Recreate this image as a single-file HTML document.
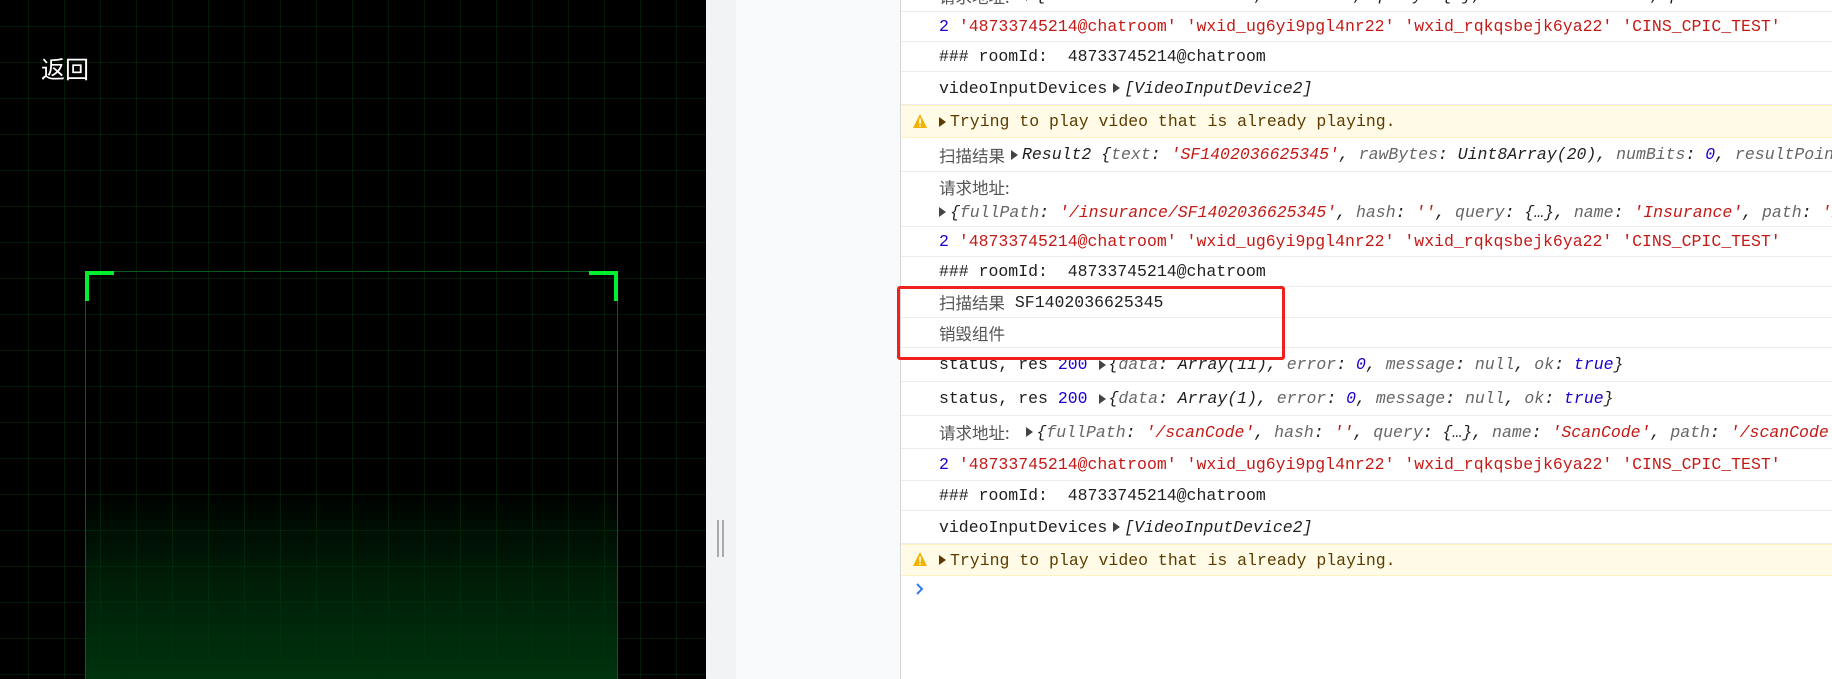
<!DOCTYPE html>
<html><head><meta charset="utf-8">
<style>
*{margin:0;padding:0;box-sizing:border-box}
html,body{width:1832px;height:679px;overflow:hidden;background:#fff}
body{position:relative;font-family:"Liberation Mono","Noto Sans CJK SC",monospace}
#left{position:absolute;left:0;top:0;width:706px;height:679px;background:#000;
 background-image:linear-gradient(to right,rgba(0,120,30,.22) 1px,transparent 1px),linear-gradient(to bottom,rgba(0,120,30,.22) 1px,transparent 1px);
 background-size:36px 36px;background-position:28px 26px;overflow:hidden}
#back{position:absolute;left:41px;top:50px;color:#fff;font:24px "Noto Sans CJK SC",sans-serif}
#frame{position:absolute;left:85px;top:271px;width:533px;height:420px;border:1px solid #0a5a1a;border-bottom:none;
 background:linear-gradient(to bottom,transparent 0,transparent 215px,rgba(0,60,15,.45) 300px,rgba(0,52,14,1) 408px)}
.c{position:absolute;width:29px;height:30px;border-top:4px solid #00f030}
.c.l{left:-1px;top:-1px;border-left:4px solid #00f030}
.c.r{right:-1px;top:-1px;border-right:4px solid #00f030}
#split{position:absolute;left:706px;top:0;width:30px;height:679px;background:#f1f3f4}
#split i{position:absolute;top:520px;width:2px;height:37px;background:#aaa}
#mid{position:absolute;left:736px;top:0;width:164px;height:679px;background:#f8f9fa}
#con{position:absolute;left:900px;top:0;width:932px;height:679px;background:#fff;border-left:1px solid #d6d6d6}
.row{position:absolute;left:0;width:932px;border-bottom:1px solid #ececec;font-size:16.5px;color:#1f1f1f;white-space:nowrap;padding-left:38px;display:flex;align-items:center;overflow:hidden}
.warn{background:#fffbe6;border-top:1px solid #fff2c0;border-bottom:1px solid #fff2c0;color:#5c3b00}
.s{color:#c41a16}.n{color:#1c00cf}.k{color:#666;font-style:italic}.i{font-style:italic}
.zh{font-family:"Noto Sans CJK SC",sans-serif;font-size:16.5px;color:#555}
.tri{display:inline-block;width:0;height:0;border-top:5px solid transparent;border-bottom:5px solid transparent;border-left:7px solid #444;margin:0 4px 0 6px}
.wi{position:absolute;left:11px;top:50%;margin-top:-9px;width:16px;height:16px}
#box{position:absolute;left:897px;top:286px;width:388px;height:74px;border:3px solid #f0201c;border-radius:3px}
</style></head><body>
<div id="left"><div id="back">返回</div><div id="frame"><div class="c l"></div><div class="c r"></div></div></div>
<div id="split"><i style="left:11px"></i><i style="left:16px"></i></div>
<div id="mid"></div>
<div id="con">
<div class="row" style="top:-20px;height:32px"><span class="zh">请求地址:</span>&nbsp;<span class="tri"></span><span class="i">{fullPath: <span class="s">'/scanCode'</span>, hash: <span class="s">''</span>, query: {…}, name: <span class="s">'ScanCode'</span>, path: <span class="s">'/s</span></span></div>
<div class="row" style="top:12px;height:30px"><span class="n">2</span>&nbsp;<span class="s">'48733745214@chatroom' 'wxid_ug6yi9pgl4nr22' 'wxid_rqkqsbejk6ya22' 'CINS_CPIC_TEST'</span></div>
<div class="row" style="top:42px;height:30px">### roomId:&nbsp; 48733745214@chatroom</div>
<div class="row" style="top:72px;height:33px">videoInputDevices <span class="tri"></span><span class="i">[VideoInputDevice2]</span></div>
<div class="row warn" style="top:105px;height:33px"><svg class="wi" viewBox="0 0 16 16"><path d="M8 1L15 15H1Z" fill="#f2b200"/><rect x="7.2" y="5.5" width="1.6" height="5.5" fill="#fff"/><rect x="7.2" y="12" width="1.6" height="1.6" fill="#fff"/></svg><span class="tri" style="margin-left:0;border-left-color:#5c3b00"></span>Trying to play video that is already playing.</div>
<div class="row" style="top:138px;height:34px"><span class="zh">扫描结果</span><span class="tri"></span><span class="i">Result2 {<span class="k">text</span>: <span class="s">'SF1402036625345'</span>, <span class="k">rawBytes</span>: Uint8Array(20), <span class="k">numBits</span>: <span class="n">0</span>, <span class="k">resultPoints</span></span></div>
<div class="row" style="top:172px;height:55px;display:block;padding-top:4px;line-height:23px"><span class="zh">请求地址:</span><br><span class="tri" style="margin-left:0"></span><span class="i">{<span class="k">fullPath</span>: <span class="s">'/insurance/SF1402036625345'</span>, <span class="k">hash</span>: <span class="s">''</span>, <span class="k">query</span>: {…}, <span class="k">name</span>: <span class="s">'Insurance'</span>, <span class="k">path</span>: <span class="s">'/</span></span></div>
<div class="row" style="top:227px;height:30px"><span class="n">2</span>&nbsp;<span class="s">'48733745214@chatroom' 'wxid_ug6yi9pgl4nr22' 'wxid_rqkqsbejk6ya22' 'CINS_CPIC_TEST'</span></div>
<div class="row" style="top:257px;height:30px">### roomId:&nbsp; 48733745214@chatroom</div>
<div class="row" style="top:287px;height:31px"><span class="zh">扫描结果</span>&nbsp;SF1402036625345</div>
<div class="row" style="top:318px;height:30px"><span class="zh">销毁组件</span></div>
<div class="row" style="top:348px;height:34px">status, res&nbsp;<span class="n">200</span>&nbsp;<span class="tri" style="margin:0 2px"></span><span class="i">{<span class="k">data</span>: Array(11), <span class="k">error</span>: <span class="n">0</span>, <span class="k">message</span>: <span class="k">null</span>, <span class="k">ok</span>: <span class="n">true</span>}</span></div>
<div class="row" style="top:382px;height:34px">status, res&nbsp;<span class="n">200</span>&nbsp;<span class="tri" style="margin:0 2px"></span><span class="i">{<span class="k">data</span>: Array(1), <span class="k">error</span>: <span class="n">0</span>, <span class="k">message</span>: <span class="k">null</span>, <span class="k">ok</span>: <span class="n">true</span>}</span></div>
<div class="row" style="top:416px;height:33px"><span class="zh">请求地址:</span>&nbsp;<span class="tri"></span><span class="i">{<span class="k">fullPath</span>: <span class="s">'/scanCode'</span>, <span class="k">hash</span>: <span class="s">''</span>, <span class="k">query</span>: {…}, <span class="k">name</span>: <span class="s">'ScanCode'</span>, <span class="k">path</span>: <span class="s">'/scanCode'</span></span></div>
<div class="row" style="top:449px;height:32px"><span class="n">2</span>&nbsp;<span class="s">'48733745214@chatroom' 'wxid_ug6yi9pgl4nr22' 'wxid_rqkqsbejk6ya22' 'CINS_CPIC_TEST'</span></div>
<div class="row" style="top:481px;height:30px">### roomId:&nbsp; 48733745214@chatroom</div>
<div class="row" style="top:511px;height:33px">videoInputDevices <span class="tri"></span><span class="i">[VideoInputDevice2]</span></div>
<div class="row warn" style="top:544px;height:32px"><svg class="wi" viewBox="0 0 16 16"><path d="M8 1L15 15H1Z" fill="#f2b200"/><rect x="7.2" y="5.5" width="1.6" height="5.5" fill="#fff"/><rect x="7.2" y="12" width="1.6" height="1.6" fill="#fff"/></svg><span class="tri" style="margin-left:0;border-left-color:#5c3b00"></span>Trying to play video that is already playing.</div>
<svg style="position:absolute;left:14px;top:582px" width="10" height="14" viewBox="0 0 10 14"><path d="M2 2L7 7L2 12" fill="none" stroke="#367cf1" stroke-width="2"/></svg>
</div>
<div id="box"></div>
</body></html>
